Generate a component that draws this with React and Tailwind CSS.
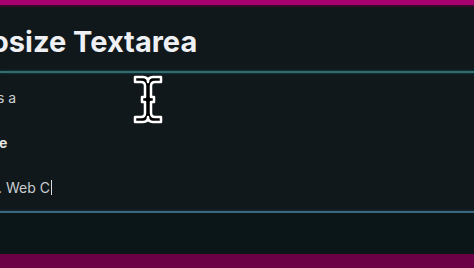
import React from "react";

const IBeam = () => (
  <svg width="30" height="50" viewBox="0 0 30 50" className="absolute left-[133px] top-[75px]">
    <path
      d="M2,2 L10,2 Q15,2 15,7 Q15,2 20,2 L28,2 L28,7 L22,7 Q18,7 18,11 L18,22 L21,22 L21,27 L18,27 L18,38 Q18,42 22,42 L28,42 L28,47 L20,47 Q15,47 15,42 Q15,47 10,47 L2,47 L2,42 L8,42 Q12,42 12,38 L12,27 L9,27 L9,22 L12,22 L12,11 Q12,7 8,7 L2,7 Z"
      fill="#000"
      stroke="#fff"
      strokeWidth="2.5"
      strokeLinejoin="round"
    />
  </svg>
);

export default function App() {
  return (
    <div
      className="relative w-[474px] h-[268px] overflow-hidden flex flex-col bg-[#10181b]"
      style={{ fontFamily: "Inter, 'Noto Sans', sans-serif" }}
    >
      <div className="h-[5px] bg-[#a8006f]" />
      <div className="h-[2px] bg-[#3a0a2c]" />

      {/* heading */}
      <div className="h-[64px] overflow-hidden">
        <h1 className="mt-[18px] ml-[-59px] whitespace-nowrap text-[29px] font-bold leading-[34px] text-[#eef0f4]">
          Autosize Textarea
        </h1>
      </div>

      {/* textarea */}
      <div className="h-[2px] bg-[#2e6d72] shadow-[0_0_3px_#1f5458]" />
      <div className="h-[138px] overflow-hidden text-[14px] text-[#c9cdd2]">
        <div className="mt-[16px] ml-[-3px] leading-[17px]">s a</div>
        <div className="mt-[28px] ml-[-1px] leading-[17px] font-bold text-[#e4e7ea]">e</div>
        <div className="mt-[28px] ml-[-2px] leading-[17px] flex items-center">
          <span>. Web C</span>
          <span className="ml-[1px] w-[1px] h-[15px] bg-[#d6dadd]" />
        </div>
      </div>
      <div className="h-[2px] bg-[#3a6680] shadow-[0_0_3px_#24455a]" />

      <div className="flex-1 bg-[#0b1618]" />
      <div className="h-[14px] bg-[#6c0046]" />

      <IBeam />
    </div>
  );
}
